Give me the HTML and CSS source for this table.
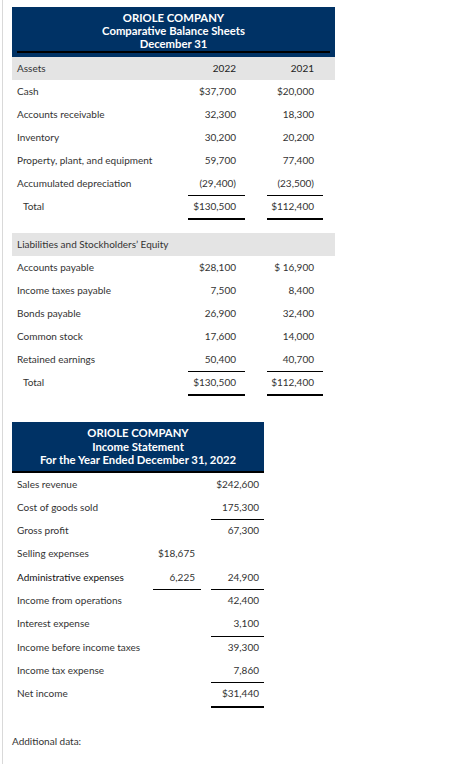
FILE: index.html
```html
<!DOCTYPE html>
<html lang="en">
<head>
  <meta charset="UTF-8">
  <meta name="viewport" content="width=device-width, initial-scale=1.0">
  <title>Oriole Company</title>
  <link rel="stylesheet" href="styles.css">
</head>
<body>
  <div class="page">

    <!-- Comparative balance sheets -->
    <section class="sheet balance">
      <div class="title">
        <div>ORIOLE COMPANY</div>
        <div>Comparative Balance Sheets</div>
        <div>December 31</div>
        <div class="title-rule"></div>
      </div>

      <div class="row head">
        <span class="label">Assets</span>
        <span class="num c1">2022</span>
        <span class="num c2">2021</span>
      </div>
      <div class="row">
        <span class="label">Cash</span>
        <span class="num c1">$37,700</span>
        <span class="num c2">$20,000</span>
      </div>
      <div class="row">
        <span class="label">Accounts receivable</span>
        <span class="num c1">32,300</span>
        <span class="num c2">18,300</span>
      </div>
      <div class="row">
        <span class="label">Inventory</span>
        <span class="num c1">30,200</span>
        <span class="num c2">20,200</span>
      </div>
      <div class="row">
        <span class="label">Property, plant, and equipment</span>
        <span class="num c1">59,700</span>
        <span class="num c2">77,400</span>
      </div>
      <div class="row">
        <span class="label">Accumulated depreciation</span>
        <span class="num c1 line">(29,400)</span>
        <span class="num c2 line">(23,500)</span>
      </div>
      <div class="row">
        <span class="label total">Total</span>
        <span class="num c1 double">$130,500</span>
        <span class="num c2 double">$112,400</span>
      </div>

      <div class="row head gap">
        <span class="label wide">Liabilities and Stockholders’ Equity</span>
      </div>
      <div class="row">
        <span class="label">Accounts payable</span>
        <span class="num c1">$28,100</span>
        <span class="num c2">$ 16,900</span>
      </div>
      <div class="row">
        <span class="label">Income taxes payable</span>
        <span class="num c1">7,500</span>
        <span class="num c2">8,400</span>
      </div>
      <div class="row">
        <span class="label">Bonds payable</span>
        <span class="num c1">26,900</span>
        <span class="num c2">32,400</span>
      </div>
      <div class="row">
        <span class="label">Common stock</span>
        <span class="num c1">17,600</span>
        <span class="num c2">14,000</span>
      </div>
      <div class="row">
        <span class="label">Retained earnings</span>
        <span class="num c1 line">50,400</span>
        <span class="num c2 line">40,700</span>
      </div>
      <div class="row">
        <span class="label total">Total</span>
        <span class="num c1 double">$130,500</span>
        <span class="num c2 double">$112,400</span>
      </div>
    </section>

    <!-- Income statement -->
    <section class="sheet income">
      <div class="title">
        <div>ORIOLE COMPANY</div>
        <div>Income Statement</div>
        <div>For the Year Ended December 31, 2022</div>
      </div>

      <div class="row">
        <span class="label">Sales revenue</span>
        <span class="num c1"></span>
        <span class="num c2">$242,600</span>
      </div>
      <div class="row">
        <span class="label">Cost of goods sold</span>
        <span class="num c1"></span>
        <span class="num c2 line">175,300</span>
      </div>
      <div class="row">
        <span class="label">Gross profit</span>
        <span class="num c1"></span>
        <span class="num c2">67,300</span>
      </div>
      <div class="row">
        <span class="label">Selling expenses</span>
        <span class="num c1">$18,675</span>
        <span class="num c2"></span>
      </div>
      <div class="row">
        <span class="label strong">Administrative expenses</span>
        <span class="num c1 line">6,225</span>
        <span class="num c2 line">24,900</span>
      </div>
      <div class="row">
        <span class="label">Income from operations</span>
        <span class="num c1"></span>
        <span class="num c2">42,400</span>
      </div>
      <div class="row">
        <span class="label">Interest expense</span>
        <span class="num c1"></span>
        <span class="num c2 line">3,100</span>
      </div>
      <div class="row">
        <span class="label">Income before income taxes</span>
        <span class="num c1"></span>
        <span class="num c2">39,300</span>
      </div>
      <div class="row">
        <span class="label">Income tax expense</span>
        <span class="num c1"></span>
        <span class="num c2 line">7,860</span>
      </div>
      <div class="row">
        <span class="label">Net income</span>
        <span class="num c1"></span>
        <span class="num c2 double">$31,440</span>
      </div>
    </section>

    <p class="note">Additional data:</p>
  </div>
</body>
</html>
```

FILE: styles.css
```css
body {
  margin: 0;
  font-family: Lato, "Open Sans", sans-serif;
  font-size: 10px;
  color: #333;
  background: #fff;
}
.page {
  margin-left: 2px;
  min-height: 100vh;
  box-sizing: border-box;
  border-left: 1px solid #d9d9d9;
  padding: 7px 0 0 9px;
}

/* statement blocks */
.sheet {
  display: flex;
  flex-direction: column;
}
.balance {
  width: 323px;
}
.income {
  width: 252px;
  margin-top: 28px;
}
.title {
  background-color: #003265;
  color: #fff;
  font-weight: bold;
  text-align: center;
  font-size: 11.3px;
}
.balance .title {
  padding: 4px 5px 4px;
  line-height: 13px;
}
.title-rule {
  margin-top: 1px;
  border-top: 2px solid #000;
}
.income .title {
  padding: 4px 0;
  line-height: 13.5px;
  border-bottom: 2px solid #000;
}

/* rows */
.row {
  display: grid;
  height: 23px;
  line-height: 23px;
  align-items: stretch;
}
.balance .row {
  grid-template-columns: 168px 73px 82px;
}
.income .row {
  grid-template-columns: 135px 60px 57px;
  height: 23.33px;
  line-height: 23.33px;
}
.row.head {
  background-color: #e4e4e4;
}
.row.head .num {
  color: #222;
}
.row.gap {
  margin-top: 15px;
}
.label {
  padding-left: 5px;
  white-space: nowrap;
}
.label.wide {
  grid-column: 1 / 4;
}
.label.total {
  padding-left: 11px;
}
.label.strong {
  color: #111;
}
.num {
  text-align: right;
  white-space: nowrap;
  padding-right: 9px;
}
.balance .c1 {
  margin: 0 8px;
}
.balance .c2 {
  margin: 0 12px 0 14px;
}
.income .c1 {
  margin: 0 6px;
  padding-right: 6px;
}
.income .c2 {
  margin-left: 4px;
  padding-right: 5px;
}
.num.line {
  box-shadow: 0 1px 0 #000;
}
.num.double {
  box-shadow: 0 2px 0 #000;
}

.note {
  margin: 24px 0 0;
  line-height: 23px;
}
```
